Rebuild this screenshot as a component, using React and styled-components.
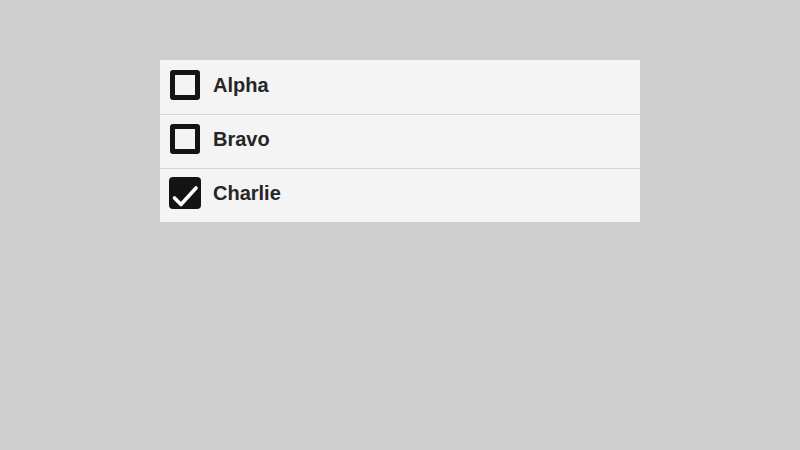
import React, { useState } from "react"
import styled, { createGlobalStyle } from "styled-components"

const GlobalStyle = createGlobalStyle`
  html, body {
    margin: 0;
    padding: 0;
    background: #cecece;
    font-family: "Liberation Sans", Arial, sans-serif;
  }
`

const Page = styled.div`
  width: 800px;
  height: 450px;
  padding-top: 60px;
  box-sizing: border-box;
  display: flex;
  justify-content: center;
  align-items: flex-start;
`

const List = styled.div`
  width: 480px;
  background: #f4f4f4;
  display: flex;
  flex-direction: column;
`

const Row = styled.label`
  height: 54px;
  box-sizing: border-box;
  display: flex;
  align-items: flex-start;
  padding: 9px 0 0 9px;
  cursor: pointer;
  & + & {
    border-top: 1px solid #d6d6d6;
    padding-top: 8px;
  }
`

const Inner = styled.span`
  height: 32px;
  display: flex;
  align-items: center;
  gap: 12px;
`

const BoxSlot = styled.span`
  width: 32px;
  height: 32px;
  display: flex;
  align-items: center;
  justify-content: center;
`

const EmptyBox = styled.span`
  width: 30px;
  height: 30px;
  box-sizing: border-box;
  border: 5px solid #141414;
  border-radius: 3px;
`

const FilledBox = styled.span`
  width: 32px;
  height: 32px;
  border-radius: 4px;
  background: #141414;
  display: flex;
`

const Label = styled.span`
  font-size: 20px;
  font-weight: bold;
  color: #262626;
`

function Check() {
  return (
    <FilledBox>
      <svg width="32" height="32" viewBox="0 0 32 32">
        <path d="M5.5 21 L12 27.5 L27 11" fill="none" stroke="#fff" strokeWidth="3.6" strokeLinecap="round" strokeLinejoin="round" />
      </svg>
    </FilledBox>
  )
}

export default function App() {
  const [items, setItems] = useState([
    { name: "Alpha", checked: false },
    { name: "Bravo", checked: false },
    { name: "Charlie", checked: true },
  ])

  const toggle = (i) => {
    setItems(items.map((it, idx) => idx === i ? { ...it, checked: !it.checked } : it))
  }

  return (
    <>
      <GlobalStyle />
      <Page>
        <List>
          {items.map((it, i) => (
            <Row key={it.name} onClick={() => toggle(i)}>
              <Inner>
                <BoxSlot>{it.checked ? <Check /> : <EmptyBox />}</BoxSlot>
                <Label>{it.name}</Label>
              </Inner>
            </Row>
          ))}
        </List>
      </Page>
    </>
  )
}
